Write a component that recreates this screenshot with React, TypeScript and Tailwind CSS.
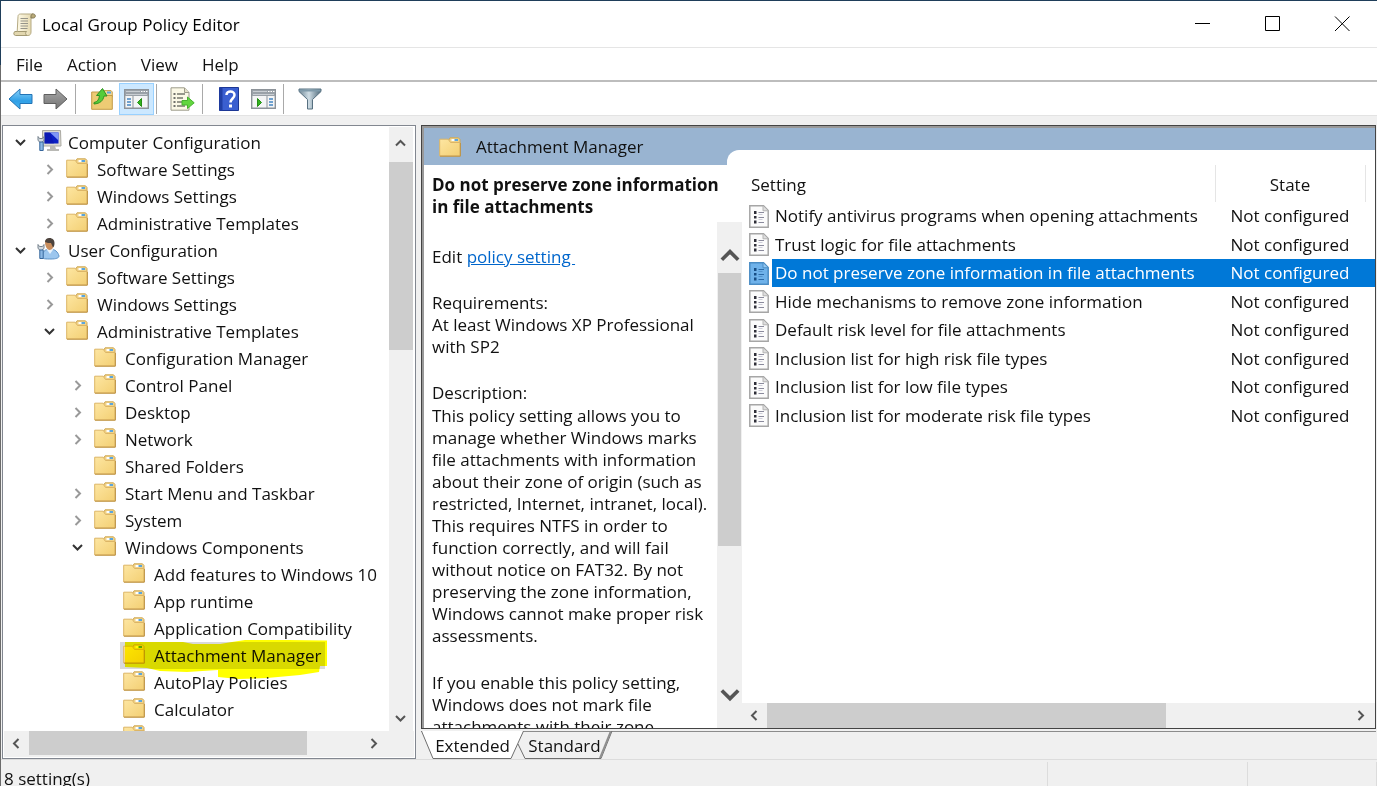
import React, { useState } from 'react';
import clsx from 'clsx';

type IconKind = 'computer' | 'user' | 'folder';

interface TreeItem {
    label: string;
    level: number;
    state?: 'open' | 'closed';
    icon?: IconKind;
}

const treeItems: TreeItem[] = [
    { label: 'Computer Configuration', level: 0, state: 'open', icon: 'computer' },
    { label: 'Software Settings', level: 1, state: 'closed' },
    { label: 'Windows Settings', level: 1, state: 'closed' },
    { label: 'Administrative Templates', level: 1, state: 'closed' },
    { label: 'User Configuration', level: 0, state: 'open', icon: 'user' },
    { label: 'Software Settings', level: 1, state: 'closed' },
    { label: 'Windows Settings', level: 1, state: 'closed' },
    { label: 'Administrative Templates', level: 1, state: 'open' },
    { label: 'Configuration Manager', level: 2 },
    { label: 'Control Panel', level: 2, state: 'closed' },
    { label: 'Desktop', level: 2, state: 'closed' },
    { label: 'Network', level: 2, state: 'closed' },
    { label: 'Shared Folders', level: 2 },
    { label: 'Start Menu and Taskbar', level: 2, state: 'closed' },
    { label: 'System', level: 2, state: 'closed' },
    { label: 'Windows Components', level: 2, state: 'open' },
    { label: 'Add features to Windows 10', level: 3 },
    { label: 'App runtime', level: 3 },
    { label: 'Application Compatibility', level: 3 },
    { label: 'Attachment Manager', level: 3 },
    { label: 'AutoPlay Policies', level: 3 },
    { label: 'Calculator', level: 3 },
    { label: 'Cloud Content', level: 3 },
];

const settings = [
    'Notify antivirus programs when opening attachments',
    'Trust logic for file attachments',
    'Do not preserve zone information in file attachments',
    'Hide mechanisms to remove zone information',
    'Default risk level for file attachments',
    'Inclusion list for high risk file types',
    'Inclusion list for low file types',
    'Inclusion list for moderate risk file types',
];

const description = [
    'This policy setting allows you to',
    'manage whether Windows marks',
    'file attachments with information',
    'about their zone of origin (such as',
    'restricted, Internet, intranet, local).',
    'This requires NTFS in order to',
    'function correctly, and will fail',
    'without notice on FAT32. By not',
    'preserving the zone information,',
    'Windows cannot make proper risk',
    'assessments.',
];

const enableText = [
    'If you enable this policy setting,',
    'Windows does not mark file',
    'attachments with their zone',
];

const indents = ['pl-0', 'pl-[29px]', 'pl-[57px]', 'pl-[86px]'];

/* ---------- icons ---------- */

const FolderIcon = () => (
    <svg width="22" height="20" viewBox="0 0 22 20" className="shrink-0">
        <defs>
            <linearGradient id="folder" x1="0" y1="0" x2="1" y2="1">
                <stop offset="0" stopColor="#fde6a2" />
                <stop offset="1" stopColor="#f3cf73" />
            </linearGradient>
        </defs>
        <path d="M9.500 3.500 11 .8h8.500L21 2.500V8H9.500z" fill="#f0d288" stroke="#cfa856" />
        <path d="M12.500 2h6.500v2h-6.500z" fill="#fff" />
        <path d="M15.500 2h3.500v2h-3.500z" fill="#5aa5dd" />
        <path d="M.7 2.200h8.500l2.300 3.300H21V19H.7z" fill="url(#folder)" stroke="#dcb566" />
        <path d="M1 19.200h20.400V6" fill="none" stroke="#bd9345" />
    </svg>
);

const ComputerIcon = () => (
    <svg width="25" height="22" viewBox="0 0 25 22" className="shrink-0">
        <path d="M5.500.5h18l.5 15.500H5.500z" fill="#dcdbd2" stroke="#aaa9a2" />
        <path d="M7.500 2.500h14v11h-14z" fill="#0b1fc4" />
        <path d="M13 2.500h8.500v8z" fill="#7f97f7" />
        <path d="M7.500 2.500H13l4 11H7.500z" fill="#0a14a8" opacity=".6" />
        <path d="M13 16h5l1 3h3v2H10v-2h3z" fill="#b9b9b5" />
        <path d="M1 6.500v4l3 2.500 3-2.500v-4L5.500 8.500h-3z" fill="#d3dae0" stroke="#75818c" />
        <path d="M2.800 12h3.400v8.500H2.800z" fill="#8bb8e5" stroke="#37679c" />
    </svg>
);

const UserIcon = () => (
    <svg width="25" height="22" viewBox="0 0 25 22" className="shrink-0">
        <path d="M5 19c0-5 3-8 8-8s8 3 9 7c0 2-3 3-8 3s-9 0-9-2z" fill="#9cc6ee" stroke="#5e93c8" />
        <path d="m9.500 11 3.500 5 3.500-5z" fill="#eaf3fb" />
        <path d="M8 4c0-4 9-4 9 1 0 4-2 7-4.500 7S8 8 8 4z" fill="#c98d5c" />
        <path d="M8 4c0-5.500 9.500-5.500 9.500 1 0 2-.5 3.500-1.500 4.500L14 5c-2 0-4 0-6-1z" fill="#4c433d" />
        <path d="M1 6.500v4l3 2.500 3-2.500v-4L5.500 8.500h-3z" fill="#d3dae0" stroke="#75818c" />
        <path d="M2.800 12h3.400v8.500H2.800z" fill="#8bb8e5" stroke="#37679c" />
    </svg>
);

const ScrollIcon = () => (
    <svg width="23" height="24" viewBox="0 0 23 24">
        <defs>
            <linearGradient id="paper" x1="0" x2="1">
                <stop offset="0" stopColor="#fffbe9" />
                <stop offset="1" stopColor="#e3d6aa" />
            </linearGradient>
        </defs>
        <path d="M5 3.500C5 2 6 1 7.500 1H20c-1.500.5-2 2-2 3.500V19c0 2-1 3.500-3 3.500H4z" fill="url(#paper)" stroke="#b5aa83" />
        <path d="M18 5V3c0-2.800 4.300-2.800 4.300 0 0 1.200-.8 2-2 2z" fill="#b9aa78" stroke="#857a56" />
        <path d="M4.500 18.500H2c-1.800.5-1.500 4 .5 4H14c-1.800-.6-1.800-3-.4-4z" fill="#e2d7af" stroke="#a39972" />
        <path d="M7.500 5.500h7.500M7.500 8h7.500M7.500 10.500h7.500M7.500 13h7.500M7.500 15.500h7" stroke="#96948a" />
    </svg>
);

const PolicyIcon = ({ selected }: { selected: boolean }) => (
    <svg width="20" height="23" viewBox="0 0 20 23" className="shrink-0">
        <path
            d="M.8.800h13.700l4.700 4.700v16.700H.8z"
            fill={selected ? '#6fb2ea' : '#fbfbfb'}
            stroke={selected ? '#4a8cc4' : '#a6a6a6'}
            strokeWidth="1.500"
        />
        <path d="M14 1v4.800h5" fill={selected ? '#94c8f2' : '#dedede'} stroke={selected ? '#4a8cc4' : '#b4b4b4'} />
        <path d="M5 6h2.500v3H5zM5 11h2.500v2.500H5zM5 15.500h2.500v3H5z" fill={selected ? '#174d84' : '#2e2e38'} />
        <path d="M9.500 7.500h5.500M9.500 12.500h5.500M9.500 17.500h5.500" stroke={selected ? '#2b6aa8' : '#8a8a9c'} />
        <path d="M9.500 9.500h4M9.500 14.500h4" stroke={selected ? '#5595cf' : '#cfcfda'} />
    </svg>
);

const ArrowIcon = ({ flip }: { flip?: boolean }) => (
    <svg width="25" height="22" viewBox="0 0 25 22" className={flip ? '-scale-x-100' : ''}>
        <defs>
            <linearGradient id="arrowBlue" x1="0" y1="0" x2="0" y2="1">
                <stop offset="0" stopColor="#8ad2fa" />
                <stop offset=".6" stopColor="#2f9fe6" />
                <stop offset="1" stopColor="#47b5f0" />
            </linearGradient>
            <linearGradient id="arrowGray" x1="0" y1="0" x2="0" y2="1">
                <stop offset="0" stopColor="#a6a6a6" />
                <stop offset="1" stopColor="#747474" />
            </linearGradient>
        </defs>
        <path
            d="M1 11 12 1v5.500h12v9H12V21z"
            fill={flip ? 'url(#arrowGray)' : 'url(#arrowBlue)'}
            stroke={flip ? '#5f5f5f' : '#2273b5'}
            strokeLinejoin="round"
        />
    </svg>
);

const FolderUpIcon = () => (
    <svg width="22" height="22" viewBox="0 0 22 22">
        <path d="M10 5 11.500 2.500H20L21.300 4v5H10z" fill="#f0d795" stroke="#c9a455" />
        <path d="M16 3.500h4v2h-4z" fill="#5aa5dd" />
        <path d="M.7 4H9l2.500 3.500h9.800v13.800H.7z" fill="#edcb74" stroke="#c39c48" />
        <path d="M3 14.500c3.500-.5 5-3 5.500-7H5.500L11.500.5 16 8h-3c-1 5-4 7.500-10 8z" fill="#55cc3a" stroke="#2f9420" />
    </svg>
);

const PaneIcon = ({ flip }: { flip?: boolean }) => (
    <svg width="25" height="20" viewBox="0 0 25 20">
        <path d="M.7.700h23.600v18.600H.7z" fill="#f4f5f6" stroke="#8d9399" strokeWidth="1.400" />
        <path d="M1 1h23v6H1z" fill="#9aa1a8" />
        <path d="M2 2.500h14M2 5.500h21" stroke="#c9ced3" />
        <path d="M17 2.500h1.500M19.500 2.500H21M22 2.500h1.500" stroke="#fff" />
        {flip ? (
            <>
                <path d="M16 7v12" stroke="#8d9399" />
                <path d="M18 10h4M18 13h4M18 16h4" stroke="#4385c2" strokeWidth="1.400" />
                <path d="m6.500 9.500 4 4-4 4z" fill="#32b31d" stroke="#258e15" />
            </>
        ) : (
            <>
                <path d="M9 7v12" stroke="#8d9399" />
                <path d="M3 10h4M3 13h4M3 16h4" stroke="#4385c2" strokeWidth="1.400" />
                <path d="m17.500 9.500-4 4 4 4z" fill="#32b31d" stroke="#258e15" />
            </>
        )}
    </svg>
);

const ExportIcon = () => (
    <svg width="25" height="24" viewBox="0 0 25 24">
        <path d="M1 .8h13.500L19 5.500v17.700H1z" fill="#fbf8e6" stroke="#9c9a8a" />
        <path d="M14.500 1v4.500H19" fill="#e3dfc6" stroke="#9c9a8a" />
        <path d="M3.500 7h2M3.500 11h2M3.500 15h2M3.500 19h2" stroke="#444" strokeWidth="1.500" />
        <path d="M7 7h8M7 11h6M7 15h5M7 19h8" stroke="#77776d" strokeWidth="1.300" />
        <path d="M12 13.500h5.500V10l6.700 5.800-6.700 5.700V18H12z" fill="#63d63f" stroke="#46b32e" />
    </svg>
);

const HelpIcon = () => (
    <svg width="20" height="24" viewBox="0 0 20 24">
        <path d="M.5.500h19v23H.5z" fill="#3a5fd0" stroke="#1c3795" />
        <path d="M.5.500h3v23h-3z" fill="#203fa5" />
        <path d="M7.500 8c0-5 8-4.500 8 0 0 3.500-4 3.500-4 7.500" fill="none" stroke="#fff" strokeWidth="2.500" />
        <path d="M10 17.500h3v3h-3z" fill="#fff" />
    </svg>
);

const FilterIcon = () => (
    <svg width="24" height="22" viewBox="0 0 24 22">
        <defs>
            <linearGradient id="funnel" x1="0" x2="1">
                <stop offset="0" stopColor="#6f8796" />
                <stop offset=".45" stopColor="#cfdde5" />
                <stop offset="1" stopColor="#4e6878" />
            </linearGradient>
        </defs>
        <path d="M1 1h22v2.500L14.500 11.500v9.500h-5v-9.500L1 3.500z" fill="url(#funnel)" stroke="#577080" />
        <path d="M1.500 1.500h21v2h-21z" fill="#7f9aaa" />
    </svg>
);

type Direction = 'up' | 'down' | 'left' | 'right';

const chevrons: Record<Direction, string> = {
    up: 'M1 6.500 5.500 2 10 6.500',
    down: 'M1 3 5.500 7.500 10 3',
    left: 'M7.500 1 3 5.500 7.500 10',
    right: 'M3.500 1 8 5.500 3.500 10',
};

const Chevron = ({ dir, size = 11, color = '#555' }: { dir: Direction; size?: number; color?: string }) => (
    <svg width={size} height={size} viewBox="0 0 11 11" fill="none" stroke={color} strokeWidth="2">
        <path d={chevrons[dir]} />
    </svg>
);

const ScrollButton = ({ dir, className, size }: { dir: Direction; className: string; size?: number }) => (
    <button aria-label={`Scroll ${dir}`} className={clsx('flex shrink-0 items-center justify-center', className)}>
        <Chevron dir={dir} size={size} />
    </button>
);

/* ---------- toolbar ---------- */

const ToolButton = ({ label, active, children }: { label: string; active?: boolean; children: React.ReactNode }) => (
    <button
        aria-label={label}
        className={clsx(
            'flex h-8 w-[35px] items-center justify-center border',
            active ? 'border-[#99d1ff] bg-[#cce8ff]' : 'border-transparent'
        )}
    >
        {children}
    </button>
);

const Separator = () => <div className="mr-2 ml-0.5 h-[30px] w-px bg-[#a9a9a9]" />;

const TreeRow = ({ item }: { item: TreeItem }) => {
    const isSelected = item.label === 'Attachment Manager';

    return (
        <li className={clsx('relative flex h-[27px] items-center', indents[item.level])}>
            <span className="flex w-[30px] shrink-0 justify-center pl-0.5">
                {item.state && (
                    <button aria-label={`Toggle ${item.label}`}>
                        {item.state === 'open' ? <Chevron dir="down" color="#333" /> : <Chevron dir="right" color="#999" />}
                    </button>
                )}
            </span>
            <span className={clsx('flex h-full items-center pr-1', isSelected && 'bg-[#d9d9d9]')}>
                <span className="flex w-[34px] pb-1 pl-[3px]">
                    {item.icon === 'computer' ? <ComputerIcon /> : item.icon === 'user' ? <UserIcon /> : <FolderIcon />}
                </span>
                <span className="whitespace-nowrap">{item.label}</span>
            </span>
            {/* Marker stroke */}
            {isSelected && (
                <svg
                    width="204"
                    height="42"
                    viewBox="124 639 204 42"
                    className="absolute -top-[3px] left-[120px] z-10 mix-blend-multiply"
                >
                    <path
                        d="M125 642h58l10 2h27l12-2 13-2h43l39 .5V666h-7l-1 6-19 3-33 3-29 1-20-2v-7l-31 2-27-1-13-3-22-1z"
                        fill="#ff0"
                    />
                </svg>
            )}
        </li>
    );
};

const TreePanel = () => (
    <nav className="flex w-[414px] shrink-0 flex-col border border-[#828790] bg-white p-px">
        <div className="flex min-h-0 flex-1">
            <ul className="min-w-0 flex-1 overflow-hidden pt-0.5">
                {treeItems.map((item, i) => (
                    <TreeRow key={i} item={item} />
                ))}
            </ul>
            <div className="mr-px flex w-6 flex-col bg-[#f0f0f0]">
                <ScrollButton dir="up" className="h-[35px] pr-0.5" />
                <div className="h-[188px] bg-[#cdcdcd]" />
                <div className="flex-1" />
                <ScrollButton dir="down" className="h-[26px] pr-0.5" />
            </div>
        </div>
        <div className="flex h-[26px] bg-[#f0f0f0] pb-0.5">
            <ScrollButton dir="left" className="w-[25px]" />
            <div className="w-[278px] bg-[#cdcdcd]" />
            <div className="flex-1" />
            <ScrollButton dir="right" className="mr-[26px] w-[30px]" />
        </div>
    </nav>
);

const DescriptionPane = () => (
    <section className="flex w-[318px] shrink-0 flex-col bg-white leading-[22px]">
        <h2 className="h-[57px] pt-[9px] pl-2 font-bold whitespace-nowrap">
            Do not preserve zone information
            <br />
            in file attachments
        </h2>
        <div className="flex min-h-0 flex-1">
            <div className="flex min-w-0 flex-1 flex-col gap-6 overflow-hidden pt-6 pl-2 whitespace-nowrap">
                <p>
                    Edit <a href="#policy" className="text-[#0066cc] underline">policy setting&nbsp;</a>
                </p>
                <p>
                    Requirements:
                    <br />
                    At least Windows XP Professional
                    <br />
                    with SP2
                </p>
                <div className="pb-px">
                    <p className="pb-px">Description:</p>
                    {description.map((line) => (
                        <p key={line}>{line}</p>
                    ))}
                </div>
                <div>
                    {enableText.map((line) => (
                        <p key={line}>{line}</p>
                    ))}
                </div>
            </div>
            <div className="flex w-[25px] shrink-0 flex-col bg-[#f0f0f0]">
                <ScrollButton dir="up" size={20} className="h-[51px] pt-5" />
                <div className="mx-px h-[273px] bg-[#cdcdcd]" />
                <div className="flex-1" />
                <ScrollButton dir="down" size={20} className="h-[66px]" />
            </div>
        </div>
    </section>
);

const SettingsList = () => {
    const [selected, setSelected] = useState(2);

    return (
        <section className="flex min-w-0 flex-1 flex-col bg-white">
            <div className="min-h-0 flex-1">
                <table className="w-full table-fixed border-collapse">
                    <colgroup>
                        <col />
                        <col className="w-[150px]" />
                        <col className="w-2.5" />
                    </colgroup>
                    <thead>
                        <tr className="h-[37px]">
                            <th className="border-r border-[#e5e5e5] p-0 pt-0.5 pl-[9px] text-left font-normal">Setting</th>
                            <th className="border-r border-[#e5e5e5] p-0 pt-0.5 font-normal">State</th>
                            <td className="p-0" />
                        </tr>
                    </thead>
                    <tbody>
                        {settings.map((name, i) => (
                            <tr
                                key={name}
                                onClick={() => setSelected(i)}
                                className={clsx('odd:h-7 even:h-[29px]', i === selected && 'text-white')}
                            >
                                <td className="p-0">
                                    <div className="flex h-7 items-center pl-[7px]">
                                        <PolicyIcon selected={i === selected} />
                                        <span
                                            className={clsx(
                                                'ml-[3px] flex h-full flex-1 items-center pl-[3px] whitespace-nowrap',
                                                i === selected && 'bg-[#0078d7]'
                                            )}
                                        >
                                            {name}
                                        </span>
                                    </div>
                                </td>
                                <td className={clsx('p-0 text-center', i === selected && 'bg-[#0078d7]')}>Not configured</td>
                                <td className={clsx('p-0', i === selected && 'bg-[#0078d7]')} />
                            </tr>
                        ))}
                    </tbody>
                </table>
            </div>
            <div className="flex h-[25px] bg-[#f0f0f0]">
                <ScrollButton dir="left" className="w-[25px]" />
                <div className="w-[399px] bg-[#cdcdcd]" />
                <div className="flex-1" />
                <ScrollButton dir="right" className="w-[30px]" />
            </div>
        </section>
    );
};

const Tabs = () => (
    <div className="flex h-[30px] shrink-0 pt-0.5">
        <div className="flex flex-1 border-t border-[#8c8c8c]">
            <button className="relative -mt-px h-7 w-[103px] pt-0.5">
                <svg width="103" height="28" viewBox="0 0 103 28" className="absolute inset-0">
                    <path d="M.5 0 12 27.500h78L102.500 0" fill="#fff" stroke="#6e6e6e" />
                </svg>
                <span className="relative">Extended</span>
            </button>
            <button className="relative -mt-px h-7 w-[89px] pt-0.5 pr-2">
                <svg width="97" height="28" viewBox="0 0 97 28" className="absolute top-0 -left-2">
                    <path d="m2 13 7 14.500h76L96 0" fill="none" stroke="#6e6e6e" />
                    <path d="M84 27 94.500 1" stroke="#8f8f8f" strokeWidth="2" />
                </svg>
                <span className="relative">Standard</span>
            </button>
        </div>
    </div>
);

const WindowButton = ({ label, d }: { label: string; d: string }) => (
    <button aria-label={label} className="flex w-[70px] items-center justify-center">
        <svg width="16" height="16" viewBox="0 0 16 16" fill="none" stroke="#000">
            <path d={d} />
        </svg>
    </button>
);

export default function App() {
    return (
        <div className="flex h-screen overflow-hidden border-t border-[#1f3e5a] bg-[#f0f0f0] font-['Open_Sans',sans-serif] text-[17px] leading-6 text-[#111]">
            {/* Sliver of the desktop left of the window */}
            <div className="flex w-px shrink-0 flex-col bg-[#6b6b6b]">
                <div className="h-16 bg-[#1f3e5a]" />
            </div>

            <div className="flex min-w-0 flex-1 flex-col">
                <header className="flex h-[47px] shrink-0 border-b border-[#e5e5e5] bg-white">
                    <div className="flex flex-1 items-center gap-1.5 pt-px pl-3 text-black">
                        <ScrollIcon />
                        <h1>Local Group Policy Editor</h1>
                    </div>
                    <WindowButton label="Minimize" d="M1 7.500h15" />
                    <WindowButton label="Maximize" d="M1.500.500h14v14h-14z" />
                    <WindowButton label="Close" d="m1 .5 14.500 14.500M15.500.500 1 15" />
                </header>

                <div className="flex h-[34px] shrink-0 items-center gap-6 border-b-2 border-[#bdbdbd] bg-white pt-0.5 pl-[15px]">
                    {['File', 'Action', 'View', 'Help'].map((item) => (
                        <button key={item}>{item}</button>
                    ))}
                </div>

                <div className="flex h-[34px] shrink-0 items-center border-b border-[#e3e3e3] bg-white pt-px pl-0.5">
                    <ToolButton label="Back"><ArrowIcon /></ToolButton>
                    <ToolButton label="Forward"><ArrowIcon flip /></ToolButton>
                    <Separator />
                    <ToolButton label="Up one level"><FolderUpIcon /></ToolButton>
                    <ToolButton label="Show or hide console tree" active><PaneIcon /></ToolButton>
                    <Separator />
                    <ToolButton label="Export list"><ExportIcon /></ToolButton>
                    <Separator />
                    <ToolButton label="Help"><HelpIcon /></ToolButton>
                    <ToolButton label="Show or hide action pane"><PaneIcon flip /></ToolButton>
                    <Separator />
                    <ToolButton label="Filter"><FilterIcon /></ToolButton>
                </div>

                <div className="flex min-h-0 flex-1 gap-[5px] pt-[9px] pr-px pl-px">
                    <TreePanel />
                    <main className="flex min-w-0 flex-1 flex-col">
                        <div className="flex min-h-0 flex-1 flex-col border border-[#444]">
                            <div className="flex min-h-0 flex-1 flex-col border-t-2 border-l-2 border-[#999]">
                                <div className="flex h-[37px] shrink-0 items-end bg-[#99b4d1]">
                                    <div className="flex w-[303px] shrink-0 items-center gap-[15px] self-center pl-[15px]">
                                        <FolderIcon />
                                        <span>Attachment Manager</span>
                                    </div>
                                    <div className="h-[15px] flex-1 rounded-tl-[12px] bg-white" />
                                </div>
                                <div className="flex min-h-0 flex-1">
                                    <DescriptionPane />
                                    <SettingsList />
                                </div>
                            </div>
                        </div>
                        <Tabs />
                    </main>
                </div>

                <footer className="flex h-[27px] shrink-0 border-t border-[#dcdcdc] pt-0.5">
                    <span className="flex-1 pt-[5px] pl-[3px]">8 setting(s)</span>
                    <span className="w-[200px] border-l border-[#dcdcdc]" />
                    <span className="w-[130px] border-x border-[#dcdcdc]" />
                </footer>
            </div>
        </div>
    );
}
